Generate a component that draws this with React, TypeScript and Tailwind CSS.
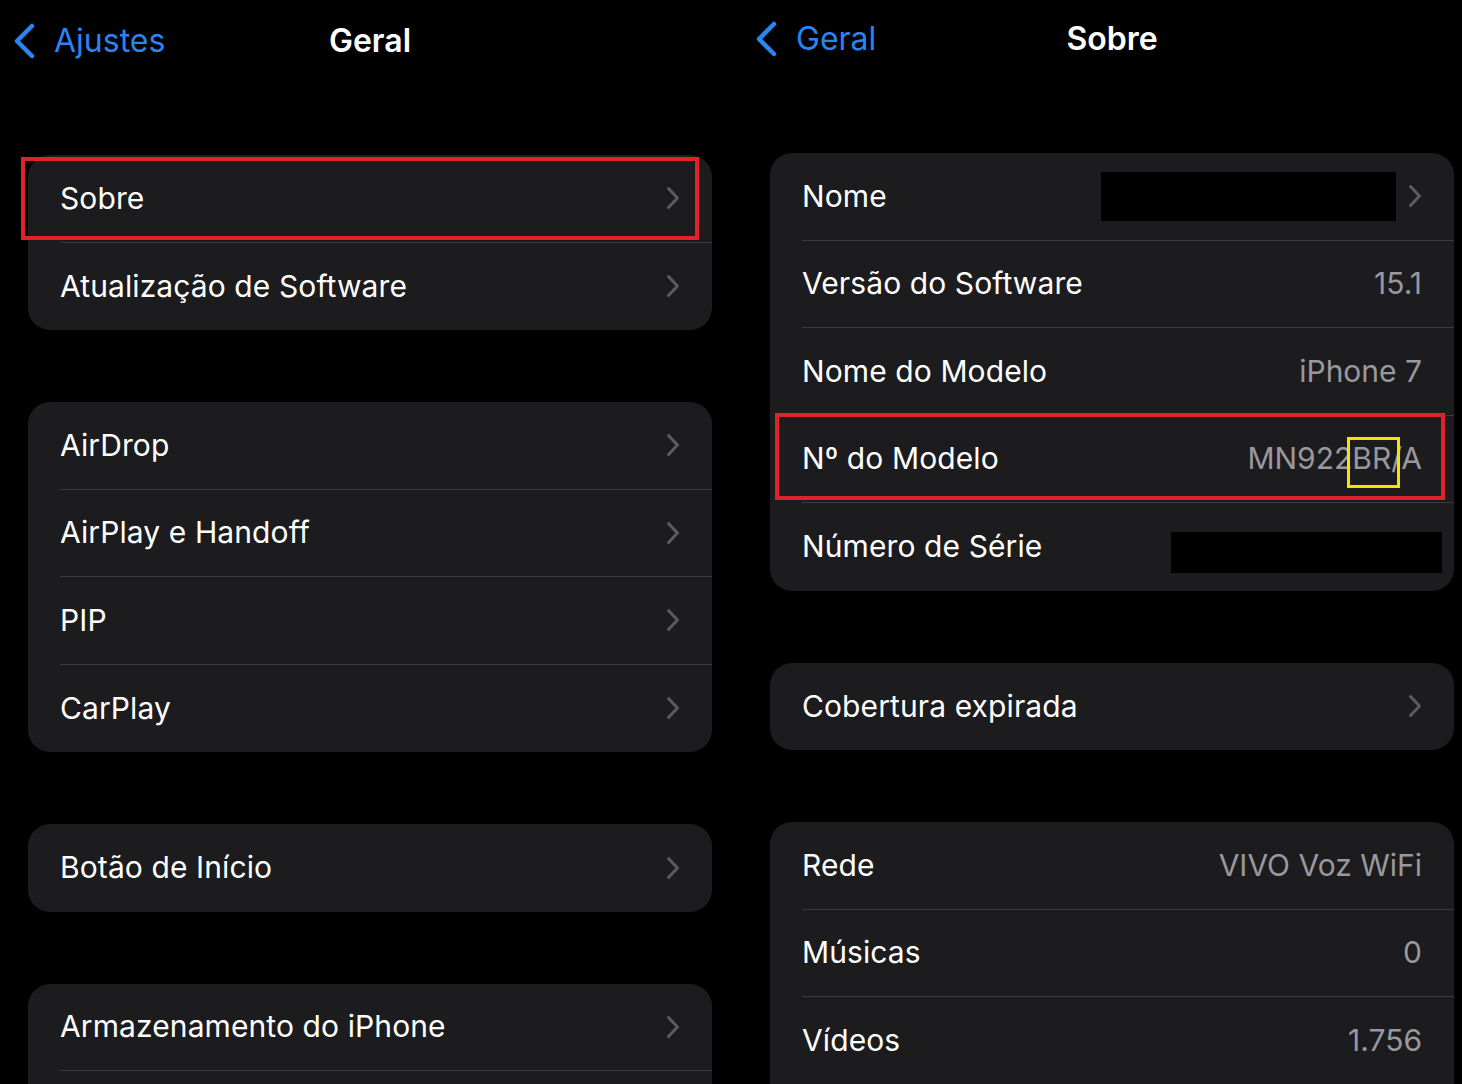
import React from "react";

const Chevron = () => (
  <svg width="14" height="24" viewBox="0 0 14 24" className="shrink-0">
    <path d="M2.5 2.5 L11.5 12 L2.5 21.5" fill="none" stroke="#5c5c60" strokeWidth="3" strokeLinecap="round" strokeLinejoin="round" />
  </svg>
);

const BackChevron = () => (
  <svg width="24" height="36" viewBox="0 0 24 36" className="shrink-0">
    <path d="M20 3 L5 18 L20 33" fill="none" stroke="#2a84f2" strokeWidth="4.5" strokeLinecap="round" strokeLinejoin="round" />
  </svg>
);

type Row = {
  label: string;
  value?: React.ReactNode;
  chevron?: boolean;
  overlay?: React.ReactNode;
};

function Card({ rows, cut }: { rows: Row[]; cut?: boolean }) {
  return (
    <div className={`bg-[#1c1c1e] ${cut ? "rounded-t-[22px]" : "rounded-[22px]"} w-[684px]`}>
      {rows.map((r, i) => (
        <div key={i} className="relative pl-[32px]">
          <div
            className={`flex items-center h-[87.5px] pr-[32px] ${
              i < rows.length - 1 || cut ? "border-b border-[#3a3a3c]" : ""
            }`}
          >
            <span className="text-[30px] text-white tracking-[0.1px]">{r.label}</span>
            <div className="flex-1" />
            {r.value !== undefined && (
              <span className="text-[30px] text-[#98989e]">{r.value}</span>
            )}
            {r.chevron && (
              <span className="ml-[12px] flex items-center">
                <Chevron />
              </span>
            )}
          </div>
          {r.overlay}
        </div>
      ))}
    </div>
  );
}

function Header({ back, title }: { back: string; title: string }) {
  return (
    <div className="relative h-[82px] flex items-center w-[684px]">
      <div className="flex items-center -ml-[16px] gap-[18px]">
        <BackChevron />
        <span className="text-[32px] text-[#2a84f2]">{back}</span>
      </div>
      <div className="absolute inset-0 flex items-center justify-center">
        <span className="text-[32px] font-semibold text-white">{title}</span>
      </div>
    </div>
  );
}

export default function App() {
  return (
    <div className="w-[1462px] h-[1084px] overflow-hidden bg-black flex items-start font-['Inter',sans-serif]">
      {/* Left column */}
      <div className="w-[740px] shrink-0 pl-[28px]">
        <Header back="Ajustes" title="Geral" />
        <div className="h-[73px]" />
        <Card
          rows={[
            {
              label: "Sobre",
              chevron: true,
              overlay: (
                <div className="absolute left-[-7px] top-[2px] w-[678px] h-[83px] border-[4px] border-[#e0222b] pointer-events-none" />
              ),
            },
            { label: "Atualização de Software", chevron: true },
          ]}
        />
        <div className="h-[72px]" />
        <Card
          rows={[
            { label: "AirDrop", chevron: true },
            { label: "AirPlay e Handoff", chevron: true },
            { label: "PIP", chevron: true },
            { label: "CarPlay", chevron: true },
          ]}
        />
        <div className="h-[72px]" />
        <Card rows={[{ label: "Botão de Início", chevron: true }]} />
        <div className="h-[72px]" />
        <Card cut rows={[{ label: "Armazenamento do iPhone", chevron: true }, { label: "" }]} />
      </div>

      {/* Right column */}
      <div className="w-[722px] shrink-0 pl-[30px]">
        <div className="-mt-[2px]">
          <Header back="Geral" title="Sobre" />
        </div>
        <div className="h-[73px]" />
        <Card
          rows={[
            {
              label: "Nome",
              value: <span className="inline-block w-[295px] h-[49px] bg-black align-middle" />,
              chevron: true,
            },
            { label: "Versão do Software", value: "15.1" },
            { label: "Nome do Modelo", value: "iPhone 7" },
            {
              label: "Nº do Modelo",
              value: (
                <span>
                  MN922
                  <span className="relative">
                    BR
                    <span className="absolute left-[-5px] right-[-9px] top-[-3px] bottom-[-12px] border-[3px] border-[#f5e400]" />
                  </span>
                  /A
                </span>
              ),
              overlay: (
                <div className="absolute left-[5px] top-[-3px] w-[670px] h-[87px] border-[4px] border-[#e0222b] pointer-events-none" />
              ),
            },
            {
              label: "Número de Série",
              overlay: <div className="absolute right-[12px] top-[29px] w-[271px] h-[41px] bg-black" />,
            },
          ]}
        />
        <div className="h-[72px]" />
        <Card rows={[{ label: "Cobertura expirada", chevron: true }]} />
        <div className="h-[72px]" />
        <Card
          cut
          rows={[
            { label: "Rede", value: "VIVO Voz WiFi" },
            { label: "Músicas", value: "0" },
            { label: "Vídeos", value: "1.756" },
          ]}
        />
      </div>
    </div>
  );
}
